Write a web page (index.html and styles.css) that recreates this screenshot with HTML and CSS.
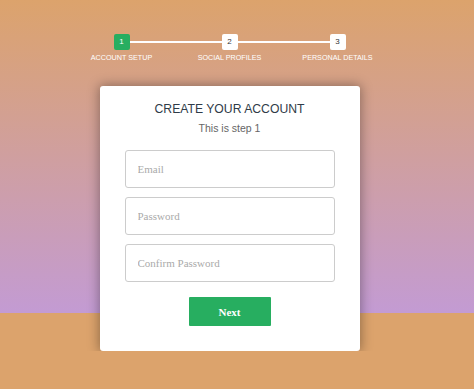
FILE: index.html
```html
<!DOCTYPE html>
<html>
<head>
<meta charset="utf-8">
<link rel="stylesheet" href="styles.css">
</head>
<body>
<div class="page">
  <ul class="progress">
    <li class="step active"><span class="num">1</span><span class="label">Account Setup</span></li>
    <li class="step"><span class="num">2</span><span class="label">Social Profiles</span></li>
    <li class="step"><span class="num">3</span><span class="label">Personal Details</span></li>
  </ul>
  <form class="card">
    <h2 class="title">CREATE YOUR ACCOUNT</h2>
    <h3 class="subtitle">This is step 1</h3>
    <div class="fields">
      <input class="field" type="text" placeholder="Email">
      <input class="field" type="password" placeholder="Password">
      <input class="field" type="password" placeholder="Confirm Password">
    </div>
    <button class="next" type="button">Next</button>
  </form>
</div>
</body>
</html>
```
FILE: styles.css
```css
html {
  background: linear-gradient(#dca36c, #c39bd3) 0 0 / 100% 313px no-repeat, #dca36c;
}
body {
  margin: 0;
  font-family: "Liberation Sans", Arial, sans-serif;
}
.page {
  display: flex;
  flex-direction: column;
  align-items: center;
  padding-top: 34px;
  padding-right: 15px;
}
.progress {
  list-style: none;
  margin: 0;
  padding: 0;
  display: flex;
  width: 324px;
}
.step {
  position: relative;
  flex: 1;
  display: flex;
  flex-direction: column;
  align-items: center;
}
.step + .step::before {
  content: "";
  position: absolute;
  top: 7px;
  left: -50%;
  width: 100%;
  height: 2px;
  background: #fff;
  z-index: 0;
}
.num {
  position: relative;
  z-index: 1;
  width: 16px;
  height: 16px;
  border-radius: 2px;
  background: #fff;
  color: #333;
  font-size: 8px;
  line-height: 16px;
  text-align: center;
}
.step.active .num {
  background: #27ae60;
  color: #fff;
}
.label {
  margin-top: 3px;
  font-size: 7.2px;
  line-height: 9px;
  text-transform: uppercase;
  color: #fff;
  white-space: nowrap;
}
.card {
  margin-top: 24px;
  width: 260px;
  box-sizing: border-box;
  background: #fff;
  border-radius: 3px;
  box-shadow: 0 0 12px 1px rgba(0, 0, 0, 0.35);
  padding: 16px 25px 25px;
  display: flex;
  flex-direction: column;
  align-items: center;
}
.title {
  margin: 0;
  font-size: 12.2px;
  line-height: 15px;
  font-weight: normal;
  color: #2f3b48;
}
.subtitle {
  margin: 5px 0 0;
  font-size: 10.5px;
  line-height: 13px;
  font-weight: normal;
  color: #666;
}
.fields {
  margin-top: 15px;
  display: flex;
  flex-direction: column;
  gap: 9px;
  width: 100%;
}
.field {
  box-sizing: border-box;
  width: 100%;
  height: 38px;
  border: 1px solid #ccc;
  border-radius: 3px;
  padding: 0 12px;
  font-family: "Liberation Serif", "Times New Roman", serif;
  font-size: 11px;
  color: #2c3e50;
  background: #fff;
}
.field::placeholder {
  color: #aaa;
}
.next {
  margin-top: 15px;
  width: 82px;
  height: 29px;
  border: none;
  border-radius: 1px;
  background: #27ae60;
  color: #fff;
  font-family: "Liberation Serif", "Times New Roman", serif;
  font-weight: bold;
  font-size: 11px;
  cursor: pointer;
}
```
